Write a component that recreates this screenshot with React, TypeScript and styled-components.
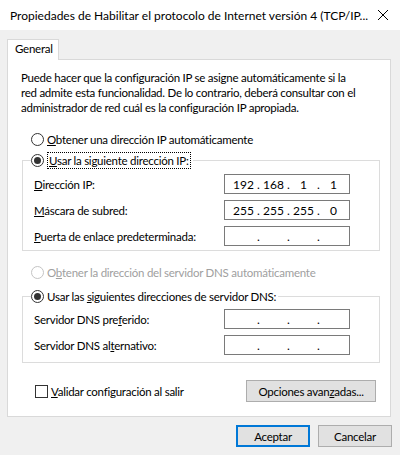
import styled, { createGlobalStyle } from "styled-components";

const GlobalStyle = createGlobalStyle`
  html, body {
    margin: 0;
    padding: 0;
  }
  body {
    width: 400px;
    height: 455px;
    overflow: hidden;
    background: #f0f0f0;
    font-family: Lato, "Segoe UI", sans-serif;
    font-size: 11.5px;
    letter-spacing: -0.25px;
    color: #000;
  }
`;

const Window = styled.div`
  width: 400px;
  height: 455px;
  display: flex;
  flex-direction: column;
  background: #f0f0f0;
`;

const TitleBar = styled.div`
  flex: none;
  height: 30px;
  box-sizing: border-box;
  background: #fff;
  display: flex;
  align-items: center;
  padding: 0 12px 0 10px;
`;

const Title = styled.div`
  flex: 1;
  white-space: nowrap;
  overflow: hidden;
  font-size: 12px;
  letter-spacing: 0;
`;

const Close = styled.svg`
  flex: none;
  margin-left: 8px;
`;

const Content = styled.div`
  padding: 9px 8px 0 7px;
`;

const TabStrip = styled.div`
  display: flex;
`;

const Tab = styled.div`
  position: relative;
  z-index: 1;
  width: 52px;
  height: 21px;
  box-sizing: border-box;
  margin-bottom: -1px;
  padding: 2px 0 0 7px;
  background: #fff;
  border: 1px solid #d9d9d9;
  border-bottom: none;
`;

const Panel = styled.div`
  height: 358px;
  box-sizing: border-box;
  margin-right: 1px;
  padding: 10px 10px 0 13px;
  background: #fff;
  border: 1px solid #d9d9d9;
`;

const Intro = styled.p`
  margin: 0;
  line-height: 15px;
  white-space: nowrap;
`;

const Key = styled.span`
  text-decoration: underline;
`;

const Option = styled.div<{ $disabled?: boolean; $gap?: number }>`
  display: flex;
  align-items: center;
  gap: 3px;
  height: 20px;
  margin: ${(p) => p.$gap ?? 0}px 0 0 10px;
  white-space: nowrap;
  color: ${(p) => (p.$disabled ? "#a0a0a0" : "#000")};
`;

const Radio = styled.span<{ $checked?: boolean; $disabled?: boolean }>`
  flex: none;
  width: 13px;
  height: 13px;
  box-sizing: border-box;
  border: 1px solid ${(p) => (p.$disabled ? "#c4c4c4" : "#333")};
  border-radius: 50%;
  background: #fff;
  display: flex;
  align-items: center;
  justify-content: center;
  &::after {
    content: "";
    display: ${(p) => (p.$checked ? "block" : "none")};
    width: 7px;
    height: 7px;
    border-radius: 50%;
    background: #333;
  }
`;

const FocusLabel = styled.span`
  border: 1px dotted #000;
  padding: 0 1px;
  line-height: 15px;
`;

const Group = styled.fieldset<{ $top: number }>`
  margin: ${(p) => p.$top}px 0 0 1px;
  padding: 0;
  min-width: 0;
  border: 1px solid #dcdcdc;
`;

const Legend = styled.legend`
  display: flex;
  align-items: center;
  gap: 3px;
  height: 20px;
  margin-left: 8px;
  padding: 0 2px 0 0;
  white-space: nowrap;
`;

const GroupBody = styled.div<{ $bottom: number }>`
  display: flex;
  flex-direction: column;
  gap: 6px;
  padding: ${(p) => (p.$bottom > 5 ? 3 : 4)}px 29px ${(p) => p.$bottom}px 11px;
`;

const Field = styled.div`
  display: flex;
  align-items: center;
  justify-content: space-between;
  height: 20px;
  white-space: nowrap;
`;

const IpBox = styled.div`
  flex: none;
  width: 126px;
  height: 20px;
  box-sizing: border-box;
  display: flex;
  align-items: center;
  padding-left: 7px;
  border: 1px solid #7a7a7a;
  background: #fff;
  font-size: 12px;
  letter-spacing: 0;
`;

const Octet = styled.span`
  width: 23px;
  text-align: center;
`;

const Dot = styled.span`
  width: 7px;
  text-align: center;
`;

const BottomRow = styled.div`
  display: flex;
  align-items: center;
  justify-content: space-between;
  height: 22px;
  margin: 17px 4px 0 14px;
  white-space: nowrap;
`;

const Check = styled.label`
  display: flex;
  align-items: center;
  gap: 3px;
`;

const CheckBox = styled.span`
  width: 13px;
  height: 13px;
  box-sizing: border-box;
  border: 1px solid #333;
  background: #fff;
`;

const Button = styled.div<{ $default?: boolean; $width: number }>`
  flex: none;
  width: ${(p) => p.$width}px;
  height: 22px;
  box-sizing: border-box;
  display: flex;
  align-items: center;
  justify-content: center;
  background: #e1e1e1;
  border: 1px solid ${(p) => (p.$default ? "#0078d7" : "#adadad")};
  box-shadow: ${(p) => (p.$default ? "inset 0 0 0 1px #0078d7" : "none")};
`;

const Footer = styled.div`
  display: flex;
  justify-content: flex-end;
  gap: 8px;
  margin-top: 8px;
`;

function IpField({ value }: { value?: string[] }) {
  const parts = value ?? ["", "", "", ""];
  return (
    <IpBox>
      {parts.map((p, i) => (
        <span key={i} style={{ display: "contents" }}>
          {i > 0 && <Dot>.</Dot>}
          <Octet>{p}</Octet>
        </span>
      ))}
    </IpBox>
  );
}

export default function App() {
  return (
    <Window>
      <GlobalStyle />
      <TitleBar>
        <Title>Propiedades de Habilitar el protocolo de Internet versión 4 (TCP/IP...</Title>
        <Close width="10" height="10" viewBox="0 0 10 10">
          <path d="M0 0L10 10M10 0L0 10" stroke="#000" strokeWidth="1" fill="none" />
        </Close>
      </TitleBar>
      <Content>
        <TabStrip>
          <Tab>General</Tab>
        </TabStrip>
        <Panel>
          <Intro>
            Puede hacer que la configuración IP se asigne automáticamente si la
            <br />
            red admite esta funcionalidad. De lo contrario, deberá consultar con el
            <br />
            administrador de red cuál es la configuración IP apropiada.
          </Intro>
          <Option $gap={14}>
            <Radio />
            <span>
              <Key>O</Key>btener una dirección IP automáticamente
            </span>
          </Option>
          <Group $top={1}>
            <Legend>
              <Radio $checked />
              <FocusLabel>
                <Key>U</Key>sar la siguiente dirección IP:
              </FocusLabel>
            </Legend>
            <GroupBody $bottom={4}>
              <Field>
                <span>
                  <Key>D</Key>irección IP:
                </span>
                <IpField value={["192", "168", "1", "1"]} />
              </Field>
              <Field>
                <span>
                  <Key>M</Key>áscara de subred:
                </span>
                <IpField value={["255", "255", "255", "0"]} />
              </Field>
              <Field>
                <span>
                  <Key>P</Key>uerta de enlace predeterminada:
                </span>
                <IpField />
              </Field>
            </GroupBody>
          </Group>
          <Option $gap={11} $disabled>
            <Radio $disabled />
            <span>
              O<Key>b</Key>tener la dirección del servidor DNS automáticamente
            </span>
          </Option>
          <Group $top={4}>
            <Legend>
              <Radio $checked />
              <span>
                Usar las <Key>s</Key>iguientes direcciones de servidor DNS:
              </span>
            </Legend>
            <GroupBody $bottom={7}>
              <Field>
                <span>
                  Servidor DNS pre<Key>f</Key>erido:
                </span>
                <IpField />
              </Field>
              <Field>
                <span>
                  Servidor DNS al<Key>t</Key>ernativo:
                </span>
                <IpField />
              </Field>
            </GroupBody>
          </Group>
          <BottomRow>
            <Check>
              <CheckBox />
              <span>
                <Key>V</Key>alidar configuración al salir
              </span>
            </Check>
            <Button $width={130}>
              Opciones avan<Key>z</Key>adas...
            </Button>
          </BottomRow>
        </Panel>
        <Footer>
          <Button $default $width={74}>
            Aceptar
          </Button>
          <Button $width={74}>Cancelar</Button>
        </Footer>
      </Content>
    </Window>
  );
}
